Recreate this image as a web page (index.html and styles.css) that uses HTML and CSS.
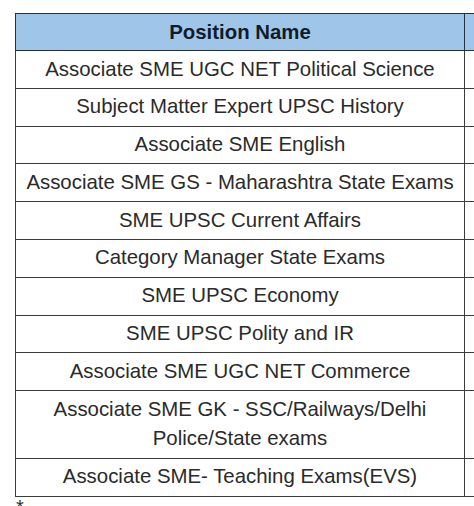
FILE: index.html
```html
<!DOCTYPE html>
<html>
<head>
<meta charset="utf-8">
<link rel="stylesheet" href="styles.css">
</head>
<body>
<div class="wrap">
<table class="jobs">
<thead>
<tr><th class="name">Position Name</th><th class="extra"></th></tr>
</thead>
<tbody>
<tr><td>Associate SME UGC NET Political Science</td><td></td></tr>
<tr><td>Subject Matter Expert UPSC History</td><td></td></tr>
<tr><td>Associate SME English</td><td></td></tr>
<tr><td>Associate SME GS - Maharashtra State Exams</td><td></td></tr>
<tr><td>SME UPSC Current Affairs</td><td></td></tr>
<tr><td>Category Manager State Exams</td><td></td></tr>
<tr><td>SME UPSC Economy</td><td></td></tr>
<tr><td>SME UPSC Polity and IR</td><td></td></tr>
<tr><td>Associate SME UGC NET Commerce</td><td></td></tr>
<tr><td>Associate SME GK - SSC/Railways/Delhi Police/State exams</td><td></td></tr>
<tr><td>Associate SME- Teaching Exams(EVS)</td><td></td></tr>
</tbody>
</table>
<div class="note">*</div>
</div>
</body>
</html>
```
FILE: styles.css
```css
html, body {
  margin: 0;
  padding: 0;
  background: #ffffff;
  overflow: hidden;
}
.wrap {
  padding: 13px 0 0 15px;
  width: 700px;
  font-family: "Liberation Sans", Arial, sans-serif;
}
.jobs {
  border-collapse: collapse;
  table-layout: fixed;
  width: 600px;
}
.jobs th, .jobs td {
  border: 1px solid #3c3c3c;
  padding: 3.5px 4px;
  text-align: center;
  font-size: 20.4px;
  line-height: 29.8px;
  color: #2a2a2a;
}
.jobs th {
  background: #9fc5e8;
  color: #111c2a;
  font-weight: bold;
  padding: 3px 4px;
  line-height: 30px;
  border-color: #26303e;
}
.jobs .name {
  width: 440px;
}
.note {
  font-size: 20px;
  line-height: 20px;
  color: #333;
  padding-left: 1px;
}
```
